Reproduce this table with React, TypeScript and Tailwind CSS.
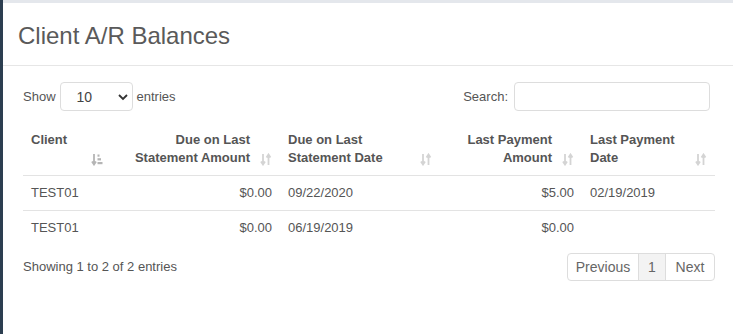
import React from "react";

type Row = {
  client: string;
  dueAmount: string;
  dueDate: string;
  payAmount: string;
  payDate: string;
};

const rows: Row[] = [
  { client: "TEST01", dueAmount: "$0.00", dueDate: "09/22/2020", payAmount: "$5.00", payDate: "02/19/2019" },
  { client: "TEST01", dueAmount: "$0.00", dueDate: "06/19/2019", payAmount: "$0.00", payDate: "" },
];

function SortBoth() {
  return (
    <svg width="12" height="13" viewBox="0 0 12 13" className="text-[#d4d4d4]">
      <path d="M3 1v10M1 8.5l2 3L5 8.5" stroke="currentColor" strokeWidth="1.8" fill="none" />
      <path d="M8.5 12V2M6.5 4.5l2-3 2 3" stroke="currentColor" strokeWidth="1.8" fill="none" />
    </svg>
  );
}

function SortAsc() {
  return (
    <svg width="12" height="13" viewBox="0 0 12 13" className="text-[#b5b5b5]">
      <path d="M3 1v10M1 8.5l2 3L5 8.5" stroke="currentColor" strokeWidth="1.8" fill="none" />
      <rect x="6.5" y="1.5" width="2" height="2.2" fill="currentColor" />
      <rect x="6.5" y="5.2" width="3.5" height="2.2" fill="currentColor" />
      <rect x="6.5" y="9" width="5" height="2.2" fill="currentColor" />
    </svg>
  );
}

function Th({
  children,
  right,
  width,
  active,
}: {
  children: React.ReactNode;
  right?: boolean;
  width: string;
  active?: boolean;
}) {
  return (
    <th
      className={`relative ${width} ${right ? "text-right" : "text-left"} align-top font-bold pl-2 pr-[30px] py-2 border-b border-[#e3e3e3]`}
    >
      {children}
      <span className="absolute right-[8px] bottom-[9px]">
        {active ? <SortAsc /> : <SortBoth />}
      </span>
    </th>
  );
}

export default function App() {
  return (
    <div
      className="flex w-[733px] h-[334px] bg-white text-[13px] leading-[18px] text-[#555]"
      style={{ fontFamily: '"Liberation Sans", Arial, sans-serif' }}
    >
      <div className="w-[3px] bg-[#2c3e50] shrink-0" />
      <div className="flex-1 flex flex-col border-t-[3px] border-[#e4e7ec]">
        <div className="h-[63px] flex items-center pl-[15px] pt-[3px] border-b border-[#e6e6e6]">
          <h1 className="text-[24px] text-[#5a5a5a] font-normal">Client A/R Balances</h1>
        </div>
        <div className="pl-[20px] pr-[18px] pt-[16px]">
          <div className="flex items-center justify-between h-[29px]">
            <div className="flex items-center gap-[4px]">
              <span>Show</span>
              <div className="relative w-[73px] h-[29px] border border-[#ddd] rounded-[4px] flex items-center pl-[16px] text-[14px] text-[#444]">
                10
                <svg
                  className="absolute right-[4px] top-[10px]"
                  width="10"
                  height="8"
                  viewBox="0 0 10 8"
                >
                  <path d="M1 2l4 4 4-4" stroke="#333" strokeWidth="1.8" fill="none" />
                </svg>
              </div>
              <span>entries</span>
            </div>
            <div className="flex items-center gap-[6px] mr-[5px]">
              <span>Search:</span>
              <div className="w-[196px] h-[29px] border border-[#ddd] rounded-[4px]" />
            </div>
          </div>
          <table className="w-[692px] mt-[12px] border-collapse">
            <thead>
              <tr>
                <Th width="w-[88px]" active>Client</Th>
                <Th width="w-[169px]" right>
                  Due on Last
                  <br />
                  Statement Amount
                </Th>
                <Th width="w-[160px]">
                  Due on Last
                  <br />
                  Statement Date
                </Th>
                <Th width="w-[142px]" right>
                  Last Payment
                  <br />
                  Amount
                </Th>
                <Th width="w-[133px]">
                  Last Payment
                  <br />
                  Date
                </Th>
              </tr>
            </thead>
            <tbody>
              {rows.map((r, i) => (
                <tr key={i} className={i > 0 ? "border-t border-[#e3e3e3]" : ""}>
                  <td className="px-2 py-2">{r.client}</td>
                  <td className="px-2 py-2 text-right">{r.dueAmount}</td>
                  <td className="px-2 py-2">{r.dueDate}</td>
                  <td className="px-2 py-2 text-right">{r.payAmount}</td>
                  <td className="px-2 py-2">{r.payDate}</td>
                </tr>
              ))}
            </tbody>
          </table>
          <div className="flex items-center justify-between mt-[8px]">
            <span>Showing 1 to 2 of 2 entries</span>
            <div className="flex h-[28px] border border-[#ddd] rounded-[4px] overflow-hidden text-[14px] text-[#666]">
              <span className="w-[70px] flex items-center justify-center">Previous</span>
              <span className="w-[28px] flex items-center justify-center bg-[#f3f3f3] border-x border-[#ddd]">1</span>
              <span className="w-[48px] flex items-center justify-center">Next</span>
            </div>
          </div>
        </div>
      </div>
    </div>
  );
}
